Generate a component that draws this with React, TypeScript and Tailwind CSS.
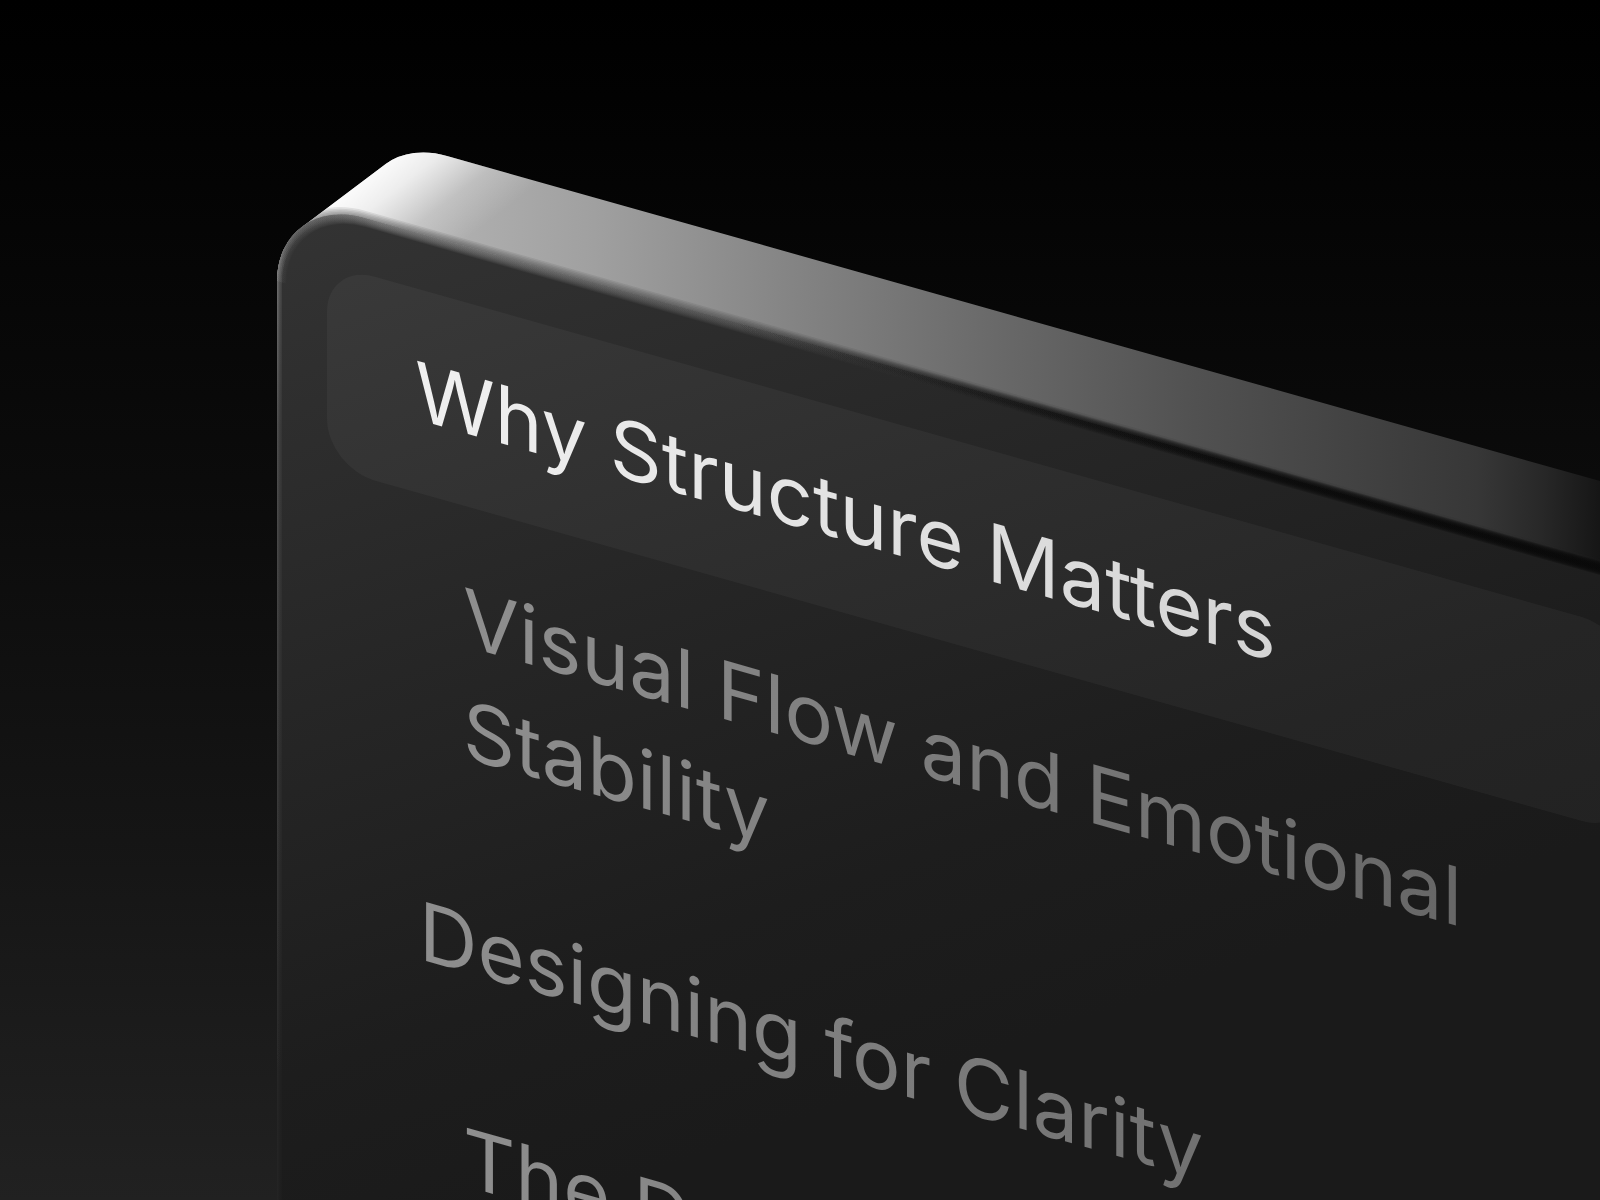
const items = [
  { label: 'Why Structure Matters', active: true },
  { label: 'Visual Flow and Emotional Stability', nested: true },
  { label: 'Designing for Clarity' },
  { label: 'The D', nested: true },
];

function Slab() {
  return (
    <svg
      className="pointer-events-none absolute left-0 top-0 overflow-visible"
      width="1500"
      height="1400"
      viewBox="0 0 1500 1400"
      aria-hidden="true"
    >
      <defs>
        <linearGradient id="edge" gradientUnits="userSpaceOnUse" x1="60" y1="0" x2="1340" y2="20">
          <stop offset="0" stopColor="#c0c0c0" />
          <stop offset="0.1" stopColor="#aeaeae" />
          <stop offset="0.2" stopColor="#a0a0a0" />
          <stop offset="0.36" stopColor="#838383" />
          <stop offset="0.52" stopColor="#686868" />
          <stop offset="0.67" stopColor="#515151" />
          <stop offset="0.83" stopColor="#3e3e3e" />
          <stop offset="0.89" stopColor="#373737" />
          <stop offset="0.94" stopColor="#282828" />
          <stop offset="1" stopColor="#101010" />
        </linearGradient>
        <linearGradient id="bevel" gradientUnits="userSpaceOnUse" x1="0" y1="0" x2="1300" y2="0">
          <stop offset="0" stopColor="#999" stopOpacity="0.2" />
          <stop offset="0.03" stopColor="#bbb" stopOpacity="0.5" />
          <stop offset="0.08" stopColor="#b0b0b0" />
          <stop offset="0.3" stopColor="#808080" />
          <stop offset="0.55" stopColor="#505050" stopOpacity="0.7" />
          <stop offset="0.8" stopColor="#202020" stopOpacity="0" />
        </linearGradient>
        <linearGradient id="glow" gradientUnits="userSpaceOnUse" x1="50" y1="-10" x2="125" y2="61">
          <stop offset="0" stopColor="#fff" />
          <stop offset="0.3" stopColor="#fff" stopOpacity="0.75" />
          <stop offset="0.65" stopColor="#fff" stopOpacity="0.22" />
          <stop offset="1" stopColor="#fff" stopOpacity="0" />
        </linearGradient>
        <linearGradient id="face" gradientUnits="userSpaceOnUse" x1="0" y1="0" x2="502" y2="793">
          <stop offset="0" stopColor="#343434" />
          <stop offset="0.47" stopColor="#262626" />
          <stop offset="0.8" stopColor="#1d1d1d" />
          <stop offset="1" stopColor="#1a1a1a" />
        </linearGradient>
        <linearGradient id="rim" gradientUnits="userSpaceOnUse" x1="0" y1="10" x2="0" y2="900">
          <stop offset="0" stopColor="#fff" stopOpacity="0" />
          <stop offset="0.07" stopColor="#fff" stopOpacity="0.08" />
          <stop offset="0.25" stopColor="#fff" stopOpacity="0.04" />
          <stop offset="1" stopColor="#fff" stopOpacity="0.01" />
        </linearGradient>
        <linearGradient id="groove" gradientUnits="userSpaceOnUse" x1="450" y1="0" x2="1300" y2="0">
          <stop offset="0" stopColor="#080808" stopOpacity="0" />
          <stop offset="0.6" stopColor="#080808" stopOpacity="0.24" />
          <stop offset="1" stopColor="#080808" stopOpacity="0.35" />
        </linearGradient>
        <clipPath id="body">
          <path d="M0 88 A88 88 0 0 1 26 26 L109 -60 A86 86 0 0 1 170 -85 L1500 -85 L1500 1400 L0 1400 Z" />
        </clipPath>
        <clipPath id="front">
          <path d="M0 1400 V88 A88 88 0 0 1 88 0 H1500 V1400 Z" />
        </clipPath>
      </defs>
      <g clipPath="url(#body)">
        <rect x="0" y="-90" width="1500" height="400" fill="url(#edge)" />
        <rect x="0" y="-90" width="400" height="200" fill="url(#glow)" />
        {/* the top side darkens just before it meets the face */}
        {[14, 11, 8, 5, 2].map((w) => (
          <path
            key={w}
            d="M0 88 A88 88 0 0 1 88 0 H1500"
            fill="none"
            stroke="#2c2c2c"
            strokeOpacity="0.1"
            strokeWidth={w}
          />
        ))}
      </g>
      <g clipPath="url(#front)">
        <rect width="1500" height="1400" fill="url(#face)" />
        {[18, 16, 14, 12, 10, 8, 6, 4, 2].map((w) => (
          <path
            key={w}
            d="M0 88 A88 88 0 0 1 88 0 H1500"
            fill="none"
            stroke="url(#bevel)"
            strokeOpacity="0.09"
            strokeWidth={w}
          />
        ))}
        {[10, 7, 4, 2].map((w) => (
          <path
            key={w}
            d="M0 1400 V88 A88 88 0 0 1 88 0"
            fill="none"
            stroke="url(#rim)"
            strokeWidth={w}
          />
        ))}
      </g>
      {[14, 12, 10, 8, 6, 4].map((w) => (
        <path key={w} d="M450 2 H1500" stroke="url(#groove)" strokeWidth={w} fill="none" />
      ))}
    </svg>
  );
}

export default function App() {
  return (
    <main className="h-screen overflow-hidden bg-[linear-gradient(to_bottom,#000_0%,#030303_12%,#0b0b0b_40%,#151515_70%,#212121_100%)] pl-[277px] pt-[193px] font-['Inter',sans-serif]">
      <div className="relative -mr-20 origin-top-left skew-y-[15.75deg]">
        <Slab />
        <nav className="relative px-[50px] pt-14" aria-label="Contents">
          <ul className="text-[81px] leading-[112px]">
            {items.map((item) => (
              <li key={item.label}>
                <a
                  href="#"
                  aria-current={item.active ? 'true' : undefined}
                  className={
                    item.active
                      ? 'mb-1 block rounded-[48px] bg-white/4 px-[88px] py-[46px]'
                      : item.nested
                        ? 'block py-[51px] pl-[136px] pr-[100px]'
                        : 'block px-[92px] py-[51px]'
                  }
                >
                  <span
                    className={
                      item.active
                        ? 'block bg-linear-to-r from-[#f0f0f0] to-[#cccccc] bg-clip-text text-transparent'
                        : 'block bg-linear-to-r from-[#8f8f8f] to-[#646464] bg-clip-text text-transparent'
                    }
                  >
                    {item.label}
                  </span>
                </a>
              </li>
            ))}
          </ul>
        </nav>
      </div>
    </main>
  );
}
